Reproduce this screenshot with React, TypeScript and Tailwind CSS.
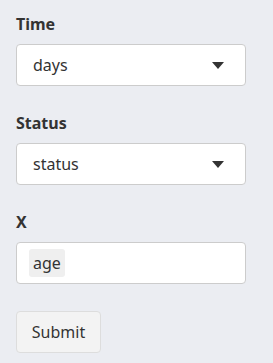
import React from "react";

function Caret() {
  return (
    <svg width="12" height="7" viewBox="0 0 12 7" className="shrink-0">
      <path d="M0 0 L12 0 L6 7 Z" fill="#333" />
    </svg>
  );
}

function Label({ children }: { children: React.ReactNode }) {
  return <div className="font-bold text-[16px] leading-[20px] text-[#333] mb-[10px]">{children}</div>;
}

export default function App() {
  return (
    <div
      className="w-[273px] h-[363px] bg-[#ebedf2] px-[16px] pt-[14px] text-[#333]"
      style={{ fontFamily: "'Noto Sans', sans-serif" }}
    >
      <Label>Time</Label>
      <div className="w-[230px] h-[42px] bg-white border border-[#ccc] rounded-[4px] flex items-center justify-between pl-[16px] pr-[21px] text-[16px] mb-[27px]">
        <span>days</span>
        <Caret />
      </div>
      <Label>Status</Label>
      <div className="w-[230px] h-[42px] bg-white border border-[#ccc] rounded-[4px] flex items-center justify-between pl-[16px] pr-[21px] text-[16px] mb-[27px]">
        <span>status</span>
        <Caret />
      </div>
      <Label>X</Label>
      <div className="w-[230px] h-[42px] bg-white border border-[#ccc] rounded-[4px] flex items-center pl-[12px] text-[16px] mb-[27px]">
        <span className="bg-[#efefef] rounded-[3px] px-[4px] h-[28px] flex items-center">age</span>
      </div>
      <button className="w-[85px] h-[42px] bg-[#f3f3f3] border border-[#ddd] rounded-[4px] text-[16px] text-[#333]">
        Submit
      </button>
    </div>
  );
}
